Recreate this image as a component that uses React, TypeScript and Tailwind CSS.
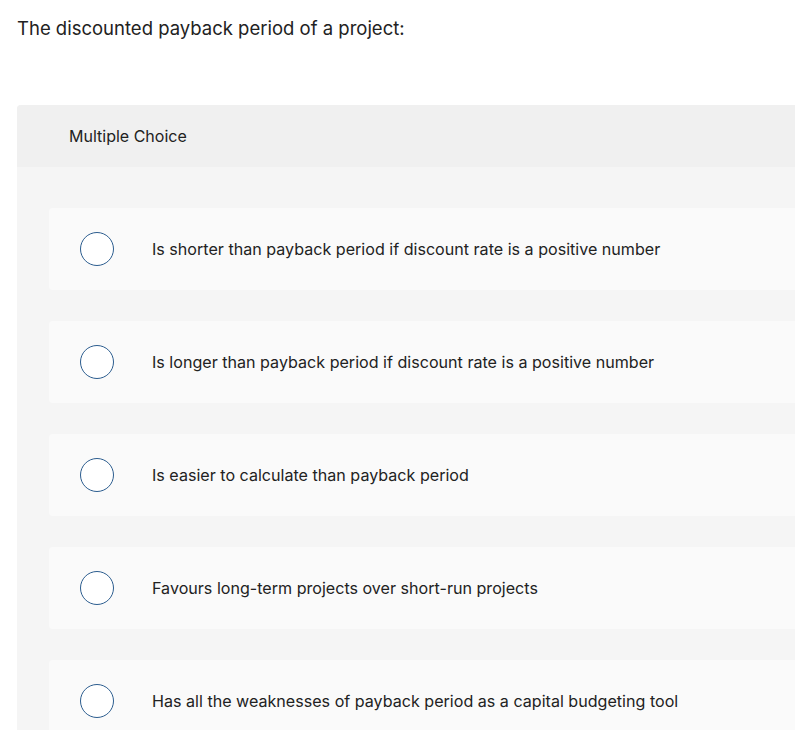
const options = [
  'Is shorter than payback period if discount rate is a positive number',
  'Is longer than payback period if discount rate is a positive number',
  'Is easier to calculate than payback period',
  'Favours long-term projects over short-run projects',
  'Has all the weaknesses of payback period as a capital budgeting tool',
]

export default function App() {
  return (
    <div className="w-[795px] h-[730px] overflow-hidden bg-white font-['Inter',sans-serif] text-[#222]">
      <h1 className="pl-[17px] pt-[16px] text-[18.5px] leading-[24px]">The discounted payback period of a project:</h1>

      <div className="ml-[17px] mt-[65px] w-[820px] rounded-tl-[4px] bg-[#f5f5f5]">
        <div className="h-[62px] flex items-center pl-[52px] bg-[#f0f0f0] rounded-tl-[4px] text-[16px]">
          Multiple Choice
        </div>

        <div className="pt-[41px] pl-[32px] flex flex-col gap-[31px]">
          {options.map((text) => (
            <div key={text} className="h-[82px] flex items-center bg-[#fafafa] rounded-[4px]">
              <span className="ml-[31px] w-[34px] h-[34px] rounded-full border-[1.5px] border-[#2c5d8f] bg-white shrink-0" />
              <span className="ml-[38px] text-[16.1px] text-[#222]">{text}</span>
            </div>
          ))}
        </div>
      </div>
    </div>
  )
}
